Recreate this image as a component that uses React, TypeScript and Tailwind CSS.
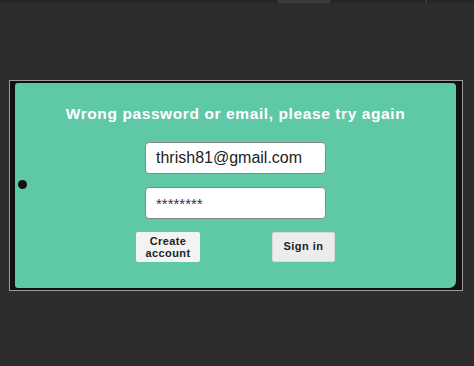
export default function App() {
  return (
    <div className="w-[474px] h-[366px] bg-[#2d2d2d] relative overflow-hidden" style={{ fontFamily: '"Liberation Sans", Arial, sans-serif' }}>
      {/* top strip */}
      <div className="h-[3px] bg-[#262626] flex">
        <div className="w-[278px]" />
        <div className="w-[52px] bg-[#3c3c3c]" />
        <div className="w-[95px]" />
        <div className="w-[2px] bg-[#3a3a3a]" />
      </div>

      <div className="pt-[77px] pl-[9px]">
        <div className="w-[454px] h-[211px] border border-[#9a9a9a] bg-[#111] pl-[5px] pr-[6px] pt-[2px] pb-[2px] relative">
          <div className="h-full bg-[#5fc9a7] rounded-tl-[3px] rounded-tr-[4px] rounded-br-[7px] rounded-bl-[3px] flex flex-col items-center pt-[23px]">
            <h1 className="text-white font-bold text-[15.5px] tracking-[0.6px] leading-none">
              Wrong password or email, please try again
            </h1>
            <div className="mt-[20px] flex flex-col gap-[13px]">
              <input
                readOnly
                value="thrish81@gmail.com"
                className="w-[181px] h-[32px] bg-white border border-[#888] rounded-[4px] px-[10px] text-[16px] text-[#222] outline-none"
              />
              <input
                readOnly
                value="********"
                className="w-[181px] h-[32px] bg-white border border-[#888] rounded-[4px] px-[10px] pt-[1px] text-[15px] text-[#333] outline-none"
              />
            </div>
            <div className="mt-[13px] flex w-[199px] justify-between">
              <button className="w-[64px] h-[30px] bg-[#f3f3f3] rounded-[2px] text-[11px] font-bold text-[#222] leading-[12px] tracking-[0.4px]">
                Create<br />account
              </button>
              <button className="w-[63px] h-[30px] bg-[#ececec] border border-[#d8d8d8] rounded-[2px] text-[11px] font-bold text-[#222] tracking-[0.5px]">
                Sign in
              </button>
            </div>
          </div>
          <div className="absolute left-[8px] top-[99px] w-[9px] h-[9px] rounded-full bg-[#111]" />
        </div>
      </div>
    </div>
  );
}
